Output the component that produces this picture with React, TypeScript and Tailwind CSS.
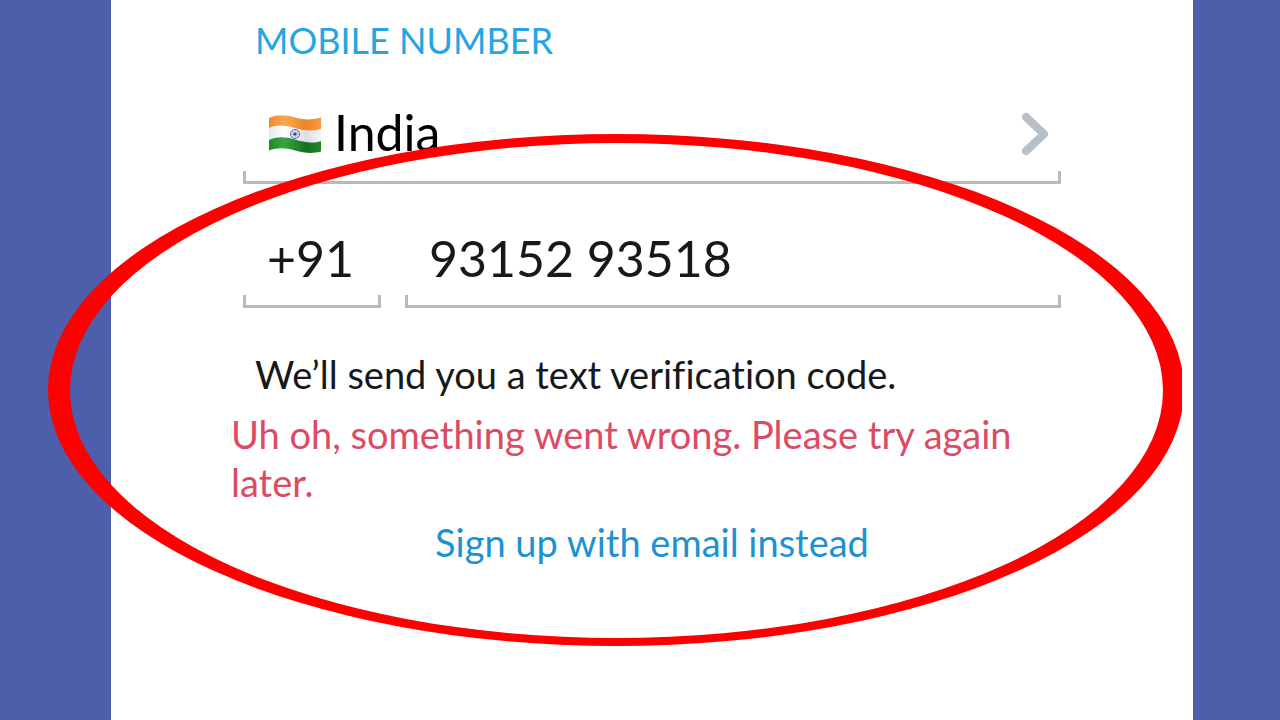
import { useState } from 'react';

const STR = {
  mobileNumber: 'MOBILE NUMBER',
  country: 'India',
  hint: 'We’ll send you a text verification code.',
  error: 'Uh oh, something went wrong. Please try again later.',
  useEmail: 'Sign up with email instead',
} as const;

function IndiaFlag() {
  return (
    <svg viewBox="0 0 54 38" className="h-[38px] w-[54px] shrink-0" aria-hidden>
      <defs>
        <linearGradient id="saffron" x1="0" x2="1" y1="0" y2="0">
          <stop offset="0" stopColor="#f08a2c" />
          <stop offset="0.3" stopColor="#fba94f" />
          <stop offset="0.7" stopColor="#ee8428" />
          <stop offset="1" stopColor="#f79a41" />
        </linearGradient>
        <linearGradient id="white" x1="0" x2="1" y1="0" y2="0">
          <stop offset="0" stopColor="#e9e9ec" />
          <stop offset="0.3" stopColor="#ffffff" />
          <stop offset="0.72" stopColor="#dcdde2" />
          <stop offset="1" stopColor="#f6f6f8" />
        </linearGradient>
        <linearGradient id="green" x1="0" x2="1" y1="0" y2="0">
          <stop offset="0" stopColor="#1f8a2c" />
          <stop offset="0.3" stopColor="#3aa540" />
          <stop offset="0.72" stopColor="#14701f" />
          <stop offset="1" stopColor="#26852f" />
        </linearGradient>
      </defs>
      <path d="M1 3C10-1 18 0 27 2.500S44 5 53 2.500V14C44 17 36 16 27 13.500S10 10 1 14Z" fill="url(#saffron)" />
      <path d="M1 13C10 9 18 10.500 27 13S44 17 53 14V26C44 29 36 27 27 24.500S10 21 1 25Z" fill="url(#white)" />
      <path d="M1 25C10 21 18 22 27 24.500S44 29 53 26V36.500C44 39 36 38 27 35.500S10 32 1 35.500Z" fill="url(#green)" />
      <circle cx="27" cy="19" r="4.500" fill="#e4e5f4" stroke="#5f66b4" strokeWidth="1" />
      <path d="M27 15V23M23 19H31M24.200 16.200L29.800 21.800M29.800 16.200L24.200 21.800" stroke="#8389c6" strokeWidth="0.500" />
      <circle cx="27" cy="19" r="1.600" fill="#343c96" />
    </svg>
  );
}

function Underline() {
  return <div className="h-[13px] border-x-[3px] border-b-[3px] border-[#b9b9b9]" />;
}

function Highlight() {
  return (
    <svg
      viewBox="0 0 1134 512"
      preserveAspectRatio="none"
      className="pointer-events-none absolute top-[134px] right-[98px] left-12 h-[512px] w-[calc(100%-146px)]"
      aria-hidden
    >
      <path
        fillRule="evenodd"
        fill="#fd0000"
        d="M0 256A568 256 0 0 1 1136 256A568 256 0 0 1 0 256ZM22 256.500A546.500 247.500 0 0 0 1115 256.500A546.500 247.500 0 0 0 22 256.500Z"
      />
    </svg>
  );
}

export default function App() {
  const [code, setCode] = useState('+91');
  const [phone, setPhone] = useState('93152 93518');

  return (
    <div className="relative flex min-h-screen bg-[#4d5fab] pr-[87px] pl-[111px] font-['Lato',sans-serif] [font-variant-ligatures:none]">
      <main className="flex-1 bg-white px-[132px]">
        <form onSubmit={(e) => e.preventDefault()}>
          <label htmlFor="phone" className="block pt-4 pl-3 text-[36px] leading-[48px] text-[#27a5e3]">
            {STR.mobileNumber}
          </label>

          <button type="button" className="mt-8 flex h-[75px] w-full items-center pr-3 pl-[25px] text-left">
            <IndiaFlag />
            <span className="mb-1 ml-3 flex-1 text-[50px] leading-[60px] text-black">{STR.country}</span>
            <svg viewBox="0 0 28 44" className="h-11 w-7" fill="none" aria-hidden>
              <path d="M5 5L23 22L5 39" stroke="#b7bfc9" strokeWidth="8" strokeLinecap="round" strokeLinejoin="round" />
            </svg>
          </button>
          <Underline />

          <div className="flex gap-6 text-[50px] leading-[60px] text-[#16191c]">
            <div className="w-[138px]">
              <input
                aria-label="Country code"
                className="block h-[111px] w-full pt-11 pb-[7px] pl-6 outline-none"
                value={code}
                onChange={(e) => setCode(e.target.value)}
              />
              <Underline />
            </div>
            <div className="flex-1">
              <input
                id="phone"
                type="tel"
                className="block h-[111px] w-full pt-11 pb-[7px] pl-6 outline-none"
                value={phone}
                onChange={(e) => setPhone(e.target.value)}
              />
              <Underline />
            </div>
          </div>

          <p className="mt-[42px] pl-3 text-[38px] leading-[48px] text-[#16191c]">{STR.hint}</p>
          <p role="alert" className="mt-3 -ml-3 text-[38px] leading-[48px] text-[#dc4b63]">
            {STR.error}
          </p>
          <div className="mt-3 text-center text-[38px] leading-[48px]">
            <a href="#email" className="text-[#1d92d2]">
              {STR.useEmail}
            </a>
          </div>
        </form>
      </main>
      <Highlight />
    </div>
  );
}
